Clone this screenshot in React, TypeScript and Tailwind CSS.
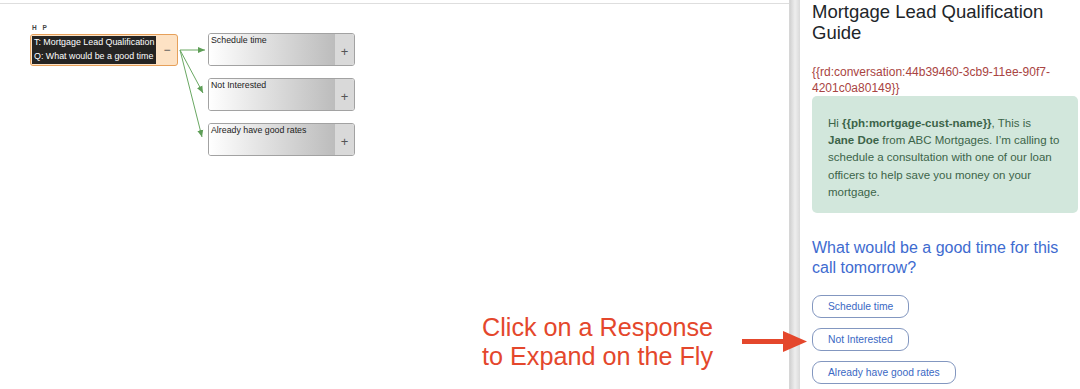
import React from "react"

const responses = [
	{ label: "Schedule time", top: "top-[33px]" },
	{ label: "Not Interested", top: "top-[78px]" },
	{ label: "Already have good rates", top: "top-[123px]" },
]

function ResponseNode({
	label,
	top,
}: {
	label: string
	top: string
}) {
	return (
		<div
			className={`absolute left-[208px] ${top} flex h-[33px] w-[147px] overflow-hidden rounded-[3px] border-[1.5px] border-[#a2a2a2]`}
		>
			<div className="flex-1 bg-gradient-to-r from-white to-[#bcbcbc] pl-[2px] pt-[1px] text-[8.8px] leading-[11px] text-[#222]">
				{label}
			</div>
			<div className="flex w-[19px] items-center justify-center bg-[#d9d9d9] pt-[3px] text-[13px] leading-none text-[#555]">
				+
			</div>
		</div>
	)
}

function FlowCanvas() {
	return (
		<div className="relative h-full w-[790px] border-r border-[#d6d6d6]">
			<div className="mt-[3px] border-t border-[#dedede]" />

			{/* connectors */}
			<svg
				className="pointer-events-none absolute left-0 top-0"
				width="790"
				height="389"
			>
				<defs>
					<marker
						id="arrow-green"
						markerWidth="8"
						markerHeight="8"
						refX="7"
						refY="4"
						orient="auto"
						markerUnits="userSpaceOnUse"
					>
						<path d="M0,1 L7,4 L0,7 z" fill="#5e9e57" />
					</marker>
				</defs>
				<g stroke="#6aa863" strokeWidth="1" fill="none">
					<line x1="180" y1="50" x2="205" y2="50" markerEnd="url(#arrow-green)" />
					<line x1="180" y1="50" x2="203" y2="93" markerEnd="url(#arrow-green)" />
					<line x1="180" y1="50" x2="202" y2="137" markerEnd="url(#arrow-green)" />
				</g>
			</svg>

			{/* root question node */}
			<div className="absolute left-[32px] top-[23px] text-[6.5px] font-bold tracking-[2px] text-[#444]">
				H P
			</div>
			<div className="absolute left-[30px] top-[34px] flex h-[32px] w-[148px] overflow-hidden rounded-[3px] border-[1.5px] border-[#e6a05a] bg-[#fde2c4]">
				<div className="m-[1px] flex-1 bg-[#252423] pl-[2px] text-[8.9px] leading-[13.5px] text-white">
					<div>T: Mortgage Lead Qualification</div>
					<div>Q: What would be a good time</div>
				</div>
				<div className="flex w-[20px] items-center justify-center text-[12px] text-[#555]">
					−
				</div>
			</div>

			{responses.map((r) => (
				<ResponseNode key={r.label} label={r.label} top={r.top} />
			))}
		</div>
	)
}

function GuidePanel() {
	return (
		<aside className="w-[280px] pl-[12px] pr-[2px] pt-[2px]">
			<h1 className="text-[18.5px] leading-[20.5px] text-[#212529]">
				Mortgage Lead Qualification Guide
			</h1>

			<p className="mt-[21px] text-[12px] leading-[16px] text-[#a94442]">
				{"{{rd:conversation:44b39460-3cb9-11ee-90f7-"}
				<wbr />
				{"4201c0a80149}}"}
			</p>

			<div className="rounded-[5px] bg-[#d2e7dc] pb-[12px] pl-[16px] pr-[10px] pt-[19px] text-[11.5px] leading-[17.2px] text-[#3c6449]">
				Hi <b>{"{{ph:mortgage-cust-name}}"}</b>, This is
				<br />
				<b>Jane Doe</b> from ABC Mortgages. I’m calling to
				<br />
				schedule a consultation with one of our loan
				<br />
				officers to help save you money on your
				<br />
				mortgage.
			</div>

			<h2 className="mt-[25px] text-[16px] leading-[20px] text-[#3e6bd0]">
				What would be a good time for this call tomorrow?
			</h2>

			<div className="mt-[17px] flex flex-col items-start gap-[10px]">
				{responses.map((r) => (
					<button
						key={r.label}
						className="h-[23px] rounded-[9px] border border-[#8397c0] px-[15px] text-[10.3px] text-[#3a68c4]"
					>
						{r.label}
					</button>
				))}
			</div>
		</aside>
	)
}

export default function App() {
	return (
		<div className="relative flex h-[389px] w-[1080px] overflow-hidden bg-white font-['Liberation_Sans',Arial,sans-serif]">
			<FlowCanvas />
			<div className="h-full w-[10px] bg-gradient-to-r from-[#d2d2d2] via-[#eeeeee] to-[#dadada]" />
			<GuidePanel />

			{/* annotation */}
			<div className="absolute left-[482px] top-[313px] text-[25.2px] leading-[29px] text-[#e4472c]">
				<div>Click on a Response</div>
				<div>to Expand on the Fly</div>
			</div>
			<svg
				className="absolute left-[740px] top-[328px]"
				width="70"
				height="28"
			>
				<rect x="2" y="11" width="44" height="5" fill="#e4472c" />
				<polygon points="43,3 67,13.5 43,24" fill="#e4472c" />
			</svg>
		</div>
	)
}
